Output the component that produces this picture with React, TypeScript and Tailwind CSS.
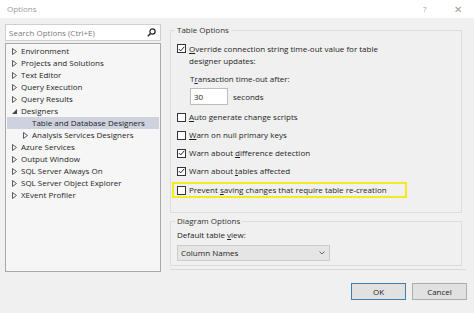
import React from "react";

const treeItems: { label: string; level: 0 | 1; state: "closed" | "open" | "none"; selected?: boolean }[] = [
  { label: "Environment", level: 0, state: "closed" },
  { label: "Projects and Solutions", level: 0, state: "closed" },
  { label: "Text Editor", level: 0, state: "closed" },
  { label: "Query Execution", level: 0, state: "closed" },
  { label: "Query Results", level: 0, state: "closed" },
  { label: "Designers", level: 0, state: "open" },
  { label: "Table and Database Designers", level: 1, state: "none", selected: true },
  { label: "Analysis Services Designers", level: 1, state: "closed" },
  { label: "Azure Services", level: 0, state: "closed" },
  { label: "Output Window", level: 0, state: "closed" },
  { label: "SQL Server Always On", level: 0, state: "closed" },
  { label: "SQL Server Object Explorer", level: 0, state: "closed" },
  { label: "XEvent Profiler", level: 0, state: "closed" },
];

function Arrow({ state }: { state: "closed" | "open" | "none" }) {
  if (state === "none") return <span className="w-[9px] shrink-0" />;
  return (
    <span className="flex w-[9px] shrink-0 items-center">
      {state === "closed" ? (
        <svg width="5" height="7" viewBox="0 0 5 7">
          <path d="M0.5 0.5 L4.5 3.5 L0.5 6.5 Z" fill="none" stroke="#5a5a5a" strokeWidth="1" />
        </svg>
      ) : (
        <svg width="5" height="5" viewBox="0 0 5 5">
          <path d="M5 0 L5 5 L0 5 Z" fill="#444" />
        </svg>
      )}
    </span>
  );
}

function Check({ checked }: { checked?: boolean }) {
  return (
    <span className="flex h-[9px] w-[9px] shrink-0 items-center justify-center border border-[#333] bg-white">
      {checked && (
        <svg width="7" height="6" viewBox="0 0 7 6">
          <path d="M0.8 3 L2.7 4.9 L6.3 0.8" fill="none" stroke="#222" strokeWidth="1" />
        </svg>
      )}
    </span>
  );
}

function Row({ checked, children }: { checked?: boolean; children: React.ReactNode }) {
  return (
    <div className="flex h-[18px] items-center gap-[3px]">
      <Check checked={checked} />
      <span>{children}</span>
    </div>
  );
}

export default function App() {
  return (
    <div className="flex h-[313px] w-[474px] flex-col bg-[#f0f0f0] font-['Segoe_UI','Open_Sans',sans-serif] text-[8px] leading-[12px] text-[#1e1e1e]">
      <div className="flex h-[18px] items-center bg-white pl-[7px] text-[#9b9b9b]">
        <span className="flex-1">Options</span>
        <span className="w-[10px] text-[8px]">?</span>
        <span className="ml-[21px] mr-[12px] text-[10px] font-light">✕</span>
      </div>

      <div className="mt-[6px] flex">
        <div className="ml-[5px] flex w-[156px] flex-col gap-[2px]">
          <div className="flex h-[17px] items-center justify-between border border-[#cfcfcf] bg-white pl-[3px] pr-[4px] text-[#7a7a7a]">
            <span>Search Options (Ctrl+E)</span>
            <svg width="9" height="9" viewBox="0 0 9 9">
              <circle cx="5.5" cy="3.5" r="2.6" fill="none" stroke="#222" strokeWidth="1.2" />
              <path d="M3.6 5.4 L0.8 8.2" stroke="#222" strokeWidth="1.4" />
            </svg>
          </div>
          <div className="h-[229px] border border-[#a9a9a9] bg-[#f6f6f6] px-px pt-px">
            {treeItems.map((it) => (
              <div
                key={it.label}
                className={`flex h-[12px] items-center ${it.level === 1 ? "pl-[16px]" : "pl-[5px]"} ${it.selected ? "bg-[#cdd2de]" : ""}`}
              >
                <Arrow state={it.state} />
                <span className="whitespace-nowrap">{it.label}</span>
              </div>
            ))}
          </div>
        </div>

        <div className="ml-[9px] flex w-[296px] flex-col">
          <fieldset className="w-[292px] border border-[#dcdcdc] pb-[14px] pt-[7px]">
            <legend className="ml-[4px] px-[2px] text-[#333]">Table Options</legend>
            <div className="flex gap-[3px] pl-[6px]">
              <div className="pt-px">
                <Check checked />
              </div>
              <span>
                <span className="underline">O</span>verride connection string time-out value for table
                <br />
                designer updates:
              </span>
            </div>
            <div className="mt-[6px] pl-[19px]">
              T<span className="underline">r</span>ansaction time-out after:
            </div>
            <div className="mt-[3px] flex items-center gap-[5px] pl-[19px]">
              <div className="flex h-[17px] w-[38px] items-center border border-[#bdbdbd] bg-white pl-[3px]">30</div>
              <span>seconds</span>
            </div>
            <div className="mt-[3px] flex flex-col pl-[6px]">
              <Row>
                <span className="underline">A</span>uto generate change scripts
              </Row>
              <Row>
                <span className="underline">W</span>arn on null primary keys
              </Row>
              <Row checked>
                Warn about <span className="underline">d</span>ifference detection
              </Row>
              <Row checked>
                Warn about <span className="underline">t</span>ables affected
              </Row>
            </div>
            <div className="ml-px mt-[2px] flex h-[16px] w-[235px] items-center gap-[3px] border-2 border-[#f4ea1d] pl-[3px]">
              <Check />
              <span>
                Prevent <span className="underline">s</span>aving changes that require table re-creation
              </span>
            </div>
          </fieldset>

          <fieldset className="mt-[2px] w-[292px] border border-[#dcdcdc] pb-[4px] pt-[2px]">
            <legend className="ml-[4px] px-[2px] text-[#333]">Diagram Options</legend>
            <div className="pl-[6px]">
              Default table <span className="underline">v</span>iew:
            </div>
            <div className="ml-[6px] mt-[4px] flex h-[16px] w-[153px] items-center justify-between border border-[#cccccc] bg-[#e5e5e5] pl-[3px] pr-[4px]">
              <span>Column Names</span>
              <svg width="6" height="4" viewBox="0 0 6 4">
                <path d="M0.5 0.5 L3 3 L5.5 0.5" fill="none" stroke="#666" strokeWidth="1" />
              </svg>
            </div>
          </fieldset>
          <div className="mt-[3px] h-px bg-[#d9d9d9]" />
        </div>
      </div>

      <div className="mt-[11px] flex justify-end gap-[6px] pr-[7px]">
        <button className="h-[17px] w-[55px] border border-[#3c7fb1] bg-[#e1e1e1]">OK</button>
        <button className="h-[17px] w-[55px] border border-[#adadad] bg-[#e1e1e1]">Cancel</button>
      </div>
    </div>
  );
}
